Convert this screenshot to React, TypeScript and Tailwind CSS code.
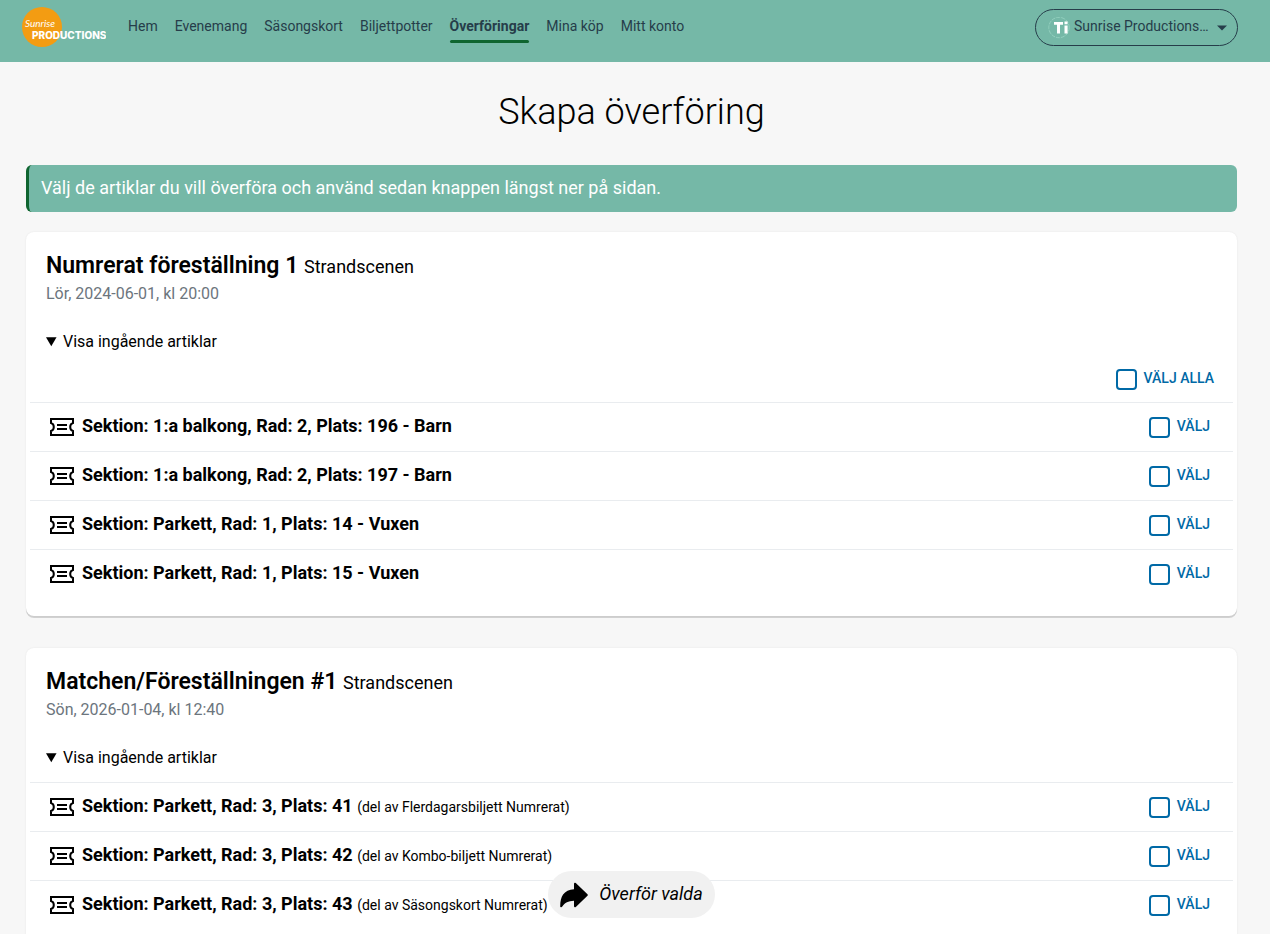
import { IoArrowRedo } from "react-icons/io5";

type Item = { seat: string; note?: string };

type Show = {
  title: string;
  venue: string;
  date: string;
  selectAll?: boolean;
  items: Item[];
};

const links = [
  "Hem",
  "Evenemang",
  "Säsongskort",
  "Biljettpotter",
  "Överföringar",
  "Mina köp",
  "Mitt konto",
];

const shows: Show[] = [
  {
    title: "Numrerat föreställning 1",
    venue: "Strandscenen",
    date: "Lör, 2024-06-01, kl 20:00",
    selectAll: true,
    items: [
      { seat: "Sektion: 1:a balkong, Rad: 2, Plats: 196 - Barn" },
      { seat: "Sektion: 1:a balkong, Rad: 2, Plats: 197 - Barn" },
      { seat: "Sektion: Parkett, Rad: 1, Plats: 14 - Vuxen" },
      { seat: "Sektion: Parkett, Rad: 1, Plats: 15 - Vuxen" },
    ],
  },
  {
    title: "Matchen/Föreställningen #1",
    venue: "Strandscenen",
    date: "Sön, 2026-01-04, kl 12:40",
    items: [
      {
        seat: "Sektion: Parkett, Rad: 3, Plats: 41",
        note: "(del av Flerdagarsbiljett Numrerat)",
      },
      {
        seat: "Sektion: Parkett, Rad: 3, Plats: 42",
        note: "(del av Kombo-biljett Numrerat)",
      },
      {
        seat: "Sektion: Parkett, Rad: 3, Plats: 43",
        note: "(del av Säsongskort Numrerat)",
      },
    ],
  },
];

const Logo = () => (
  <svg width="84" height="42" viewBox="0 0 84 42" aria-label="Sunrise Productions">
    <circle cx="20" cy="21" r="20" fill="#f39c12" />
    <text x="3" y="21" fontSize="10" fontStyle="italic" fontFamily="Lato, sans-serif" fill="#fff">
      Sunrise
    </text>
    <text x="10" y="33" fontSize="10" fontFamily="Inter, sans-serif" fontWeight="800" fill="#fff">
      PRODUCTIONS
    </text>
  </svg>
);

const TicketIcon = () => (
  <svg width="24" height="18" viewBox="0 0 24 18" fill="none" stroke="#000" strokeWidth="2" className="shrink-0">
    <path d="M1 1H23V5C20.6 5.6 20.2 7.4 20.2 9S20.6 12.4 23 13V17H1V13C3.4 12.4 3.8 10.6 3.8 9S3.4 5.6 1 5Z" />
    <path d="M7 7H17M7 11H17" />
  </svg>
);

const Check = ({ label, name }: { label: string; name: string }) => (
  <label className="flex items-start gap-[7px] text-sm leading-5 font-medium text-[#0069a6] uppercase">
    <input
      type="checkbox"
      aria-label={name}
      className="mt-px size-[21px] appearance-none rounded-[4px] border-2 border-[#0069a6] bg-white checked:bg-[#0069a6]"
    />
    {label}
  </label>
);

const Header = () => (
  <header className="flex h-[62px] items-start justify-between bg-[#75b8a7] pr-8 pl-[22px] text-sm text-[#263d4a]">
    <div className="flex items-start">
      <a href="#" className="mt-1.5 mr-[22px]">
        <Logo />
      </a>
      <nav className="mt-4 flex gap-[17px]">
        {links.map((link) => (
          <a
            key={link}
            href="#"
            className={
              link === "Överföringar"
                ? "flex flex-col gap-1 leading-5 font-bold after:h-[3px] after:rounded-full after:bg-[#0f6530]"
                : "leading-5"
            }
          >
            {link}
          </a>
        ))}
      </nav>
    </div>
    <button className="mt-[9px] flex h-[37px] w-[203px] items-center rounded-full border border-[#263d4a] pr-2.5 pl-3">
      <svg width="22" height="22" viewBox="0 0 22 22" className="mr-1 shrink-0">
        <circle cx="11" cy="10.5" r="10.2" fill="none" stroke="#9bd6c4" strokeWidth="0.8" strokeDasharray="4 1" />
        <path d="M6 5H15V7.8H12V16.5H9V7.8H6ZM16.5 8.5H19.6V16.5H16.5ZM16.5 4.5H19.6V7.2H16.5Z" fill="#fff" />
      </svg>
      <span className="mb-1 truncate leading-5">Sunrise Productions…</span>
      <svg width="10" height="6" viewBox="0 0 10 6" className="ml-auto shrink-0">
        <path d="M0 0.5H10L5 5.5Z" fill="#263d4a" />
      </svg>
    </button>
  </header>
);

const ShowCard = ({ show }: { show: Show }) => (
  <section className="rounded-lg bg-white px-1 pt-[17px] pb-[18px] shadow-[0_0_2px_rgba(0,0,0,0.08),0_2px_0_rgba(0,0,0,0.15)]">
    <div className="px-4">
      <h2 className="text-[23px] leading-[33px] font-semibold">
        {show.title} <span className="text-lg font-normal">{show.venue}</span>
      </h2>
      <p className="leading-6 text-[#6c757d]">{show.date}</p>
    </div>
    <details open className="mt-6">
      <summary className="px-4 leading-6">Visa ingående artiklar</summary>
      {show.selectAll && (
        <div className="mt-3.5 flex justify-end pr-[19px]">
          <Check label="Välj alla" name={`Välj alla, ${show.title}`} />
        </div>
      )}
      <ul className="mt-3">
        {show.items.map((item) => (
          <li
            key={item.seat}
            className="flex h-[49px] items-center justify-between border-t border-[#e9ecef] pr-[23px] pl-5"
          >
            <div className="flex items-center gap-2">
              <TicketIcon />
              <p className="mb-0.5 text-lg leading-6 font-bold">
                {item.seat} {item.note && <span className="text-sm font-normal">{item.note}</span>}
              </p>
            </div>
            <Check label="Välj" name={`Välj ${item.seat}`} />
          </li>
        ))}
      </ul>
    </details>
  </section>
);

export default function App() {
  return (
    <div className="min-h-screen bg-[#f7f7f7] font-['Roboto',sans-serif] text-black">
      <Header />
      <main className="pr-[33px] pb-8 pl-[26px]">
        <h1 className="pt-6 text-center text-4xl leading-[52px] font-light">Skapa överföring</h1>
        <p className="mt-[27px] rounded-md border-l-3 border-[#0f6530] bg-[#75b8a7] px-3 pt-[11px] pb-3 text-lg leading-6 text-white">
          Välj de artiklar du vill överföra och använd sedan knappen längst ner på sidan.
        </p>
        <div className="mt-5 flex flex-col gap-8">
          {shows.map((show) => (
            <ShowCard key={show.title} show={show} />
          ))}
        </div>
      </main>
      <div className="fixed inset-x-0 bottom-4 flex justify-center pr-[7px]">
        <button className="flex h-[47px] items-center gap-2 rounded-full bg-[#f1f1f1] pr-3 pl-[9px] text-lg italic">
          <IoArrowRedo className="size-[34px]" />
          <span className="mb-0.5">Överför valda</span>
        </button>
      </div>
    </div>
  );
}
